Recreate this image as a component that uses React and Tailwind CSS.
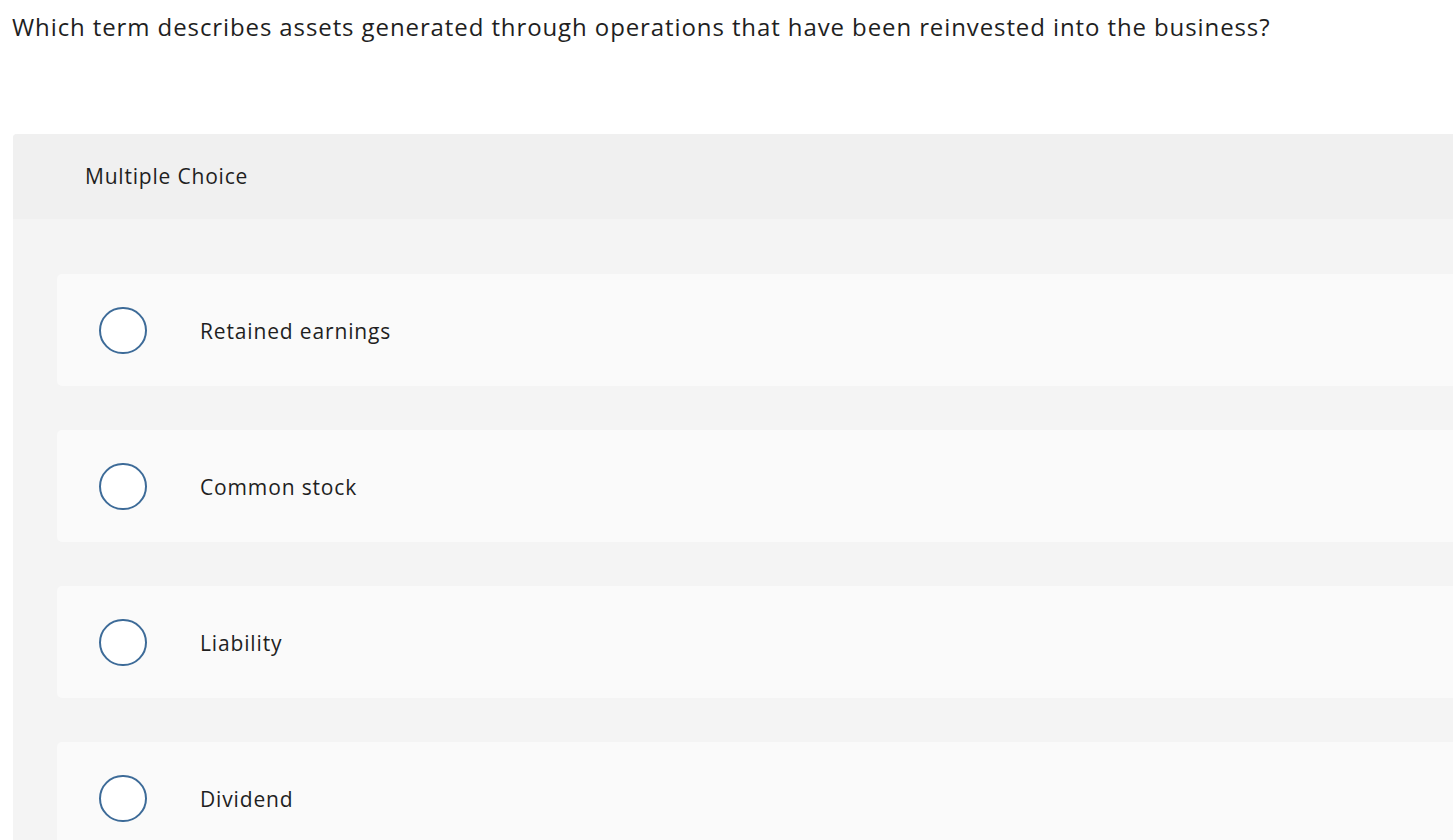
const options = ["Retained earnings", "Common stock", "Liability", "Dividend"];

export default function App() {
  return (
    <div className="min-h-[840px] overflow-hidden bg-white text-[#1f1f1f]" style={{ fontFamily: '"Open Sans", "Liberation Sans", sans-serif' }}>
      <h1 className="pl-[12px] pt-[12px] text-[24px] leading-[30px] font-normal tracking-[0.9px]">
        Which term describes assets generated through operations that have been reinvested into the business?
      </h1>

      <div className="ml-[13px] mt-[92px] rounded-tl-[4px] bg-[#f4f4f4]">
        <div className="flex h-[85px] items-center rounded-tl-[4px] bg-[#f0f0f0] pl-[72px] text-[21px] tracking-[0.8px]">
          Multiple Choice
        </div>
        <div className="flex flex-col gap-[44px] pl-[44px] pt-[55px] pb-[40px]">
          {options.map((o) => (
            <label key={o} className="flex h-[112px] items-center rounded-l-[5px] bg-[#fafafa] pl-[42px]">
              <span className="h-[47px] w-[48px] shrink-0 rounded-full border-2 border-[#3d6b98] bg-white" />
              <span className="ml-[53px] pt-[3px] text-[21px] tracking-[0.85px]">{o}</span>
            </label>
          ))}
        </div>
      </div>
    </div>
  );
}
